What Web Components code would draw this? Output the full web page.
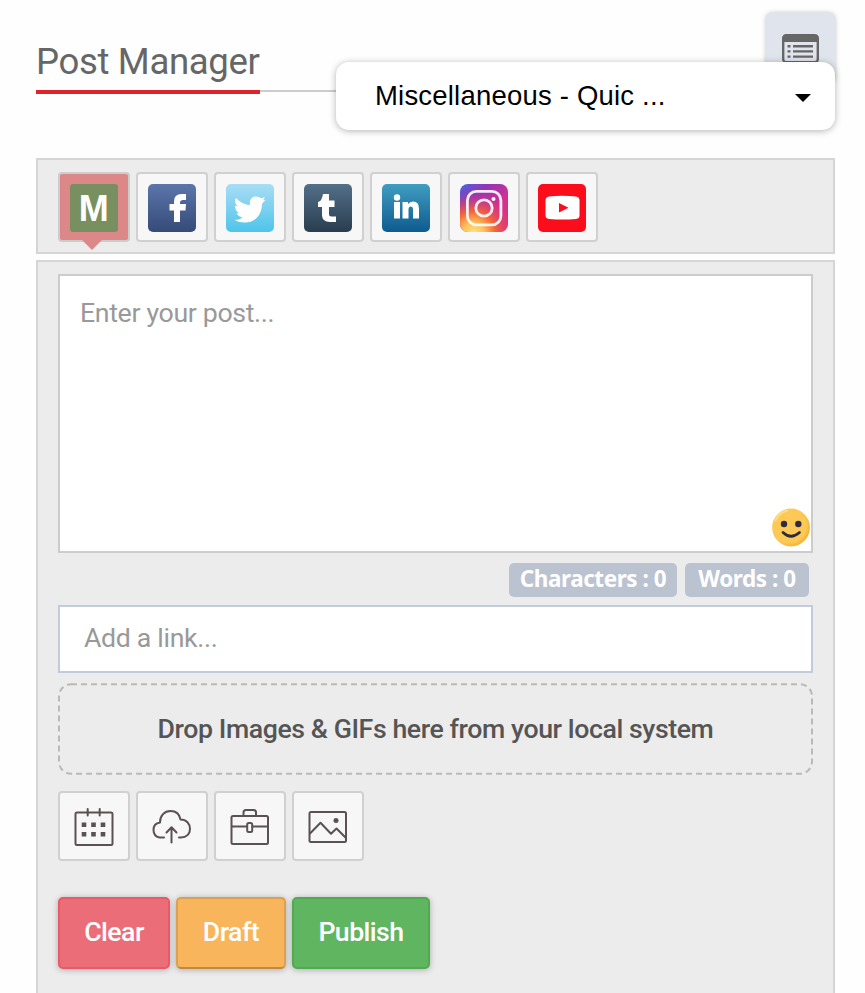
<!DOCTYPE html>
<html lang="en">
<head>
<meta charset="utf-8">
<title>Post Manager</title>
<style>
html,body{margin:0;padding:0;background:#fefefe;overflow:hidden}
body{height:993px;font-family:Roboto,"Liberation Sans",sans-serif}
</style>
</head>
<body>
<post-manager></post-manager>
<script>
const define = (name, html) => {
  const t = document.createElement('template');
  t.innerHTML = html;
  customElements.define(name, class extends HTMLElement {
    constructor() {
      super();
      this.attachShadow({mode: 'open'}).appendChild(t.content.cloneNode(true));
    }
  });
};

define('icon-tile', `
<style>
:host{display:flex;box-sizing:border-box;width:71.500px;height:70px;border:2px solid #d0d0d0;border-radius:4px;background:#f7f7f7;align-items:center;justify-content:center;position:relative}
:host([active]){background:#dd8888;border-color:#ccc}
:host([active])::after{content:"";position:absolute;left:22px;top:65.500px;border:10px solid transparent;border-top-color:#dd8888;border-bottom:0}
</style><slot></slot>`);

define('count-pill', `
<style>
:host{display:flex;box-sizing:border-box;height:34px;border-radius:5px;background:#bbc3d1;color:#fff;font:700 22.500px/34px "Noto Sans",sans-serif;letter-spacing:-.45px;justify-content:center;padding-bottom:3px;align-items:center;white-space:nowrap}
</style><slot></slot>`);

define('action-button', `
<style>
:host{display:flex;box-sizing:border-box;height:72px;border:2px solid var(--edge);border-bottom-color:var(--base,var(--edge));border-radius:5px;background:var(--fill);color:#fff;font-size:26.700px;font-weight:500;letter-spacing:-.55px;align-items:center;justify-content:center;padding-bottom:2px;box-shadow:0 1px 6px rgba(0,0,0,.28);white-space:nowrap}
</style><slot></slot>`);

define('drop-zone', `
<style>
:host{display:block;height:92px;position:relative;color:#555;font-weight:500;font-size:26.700px;letter-spacing:-.42px;line-height:92px;text-align:center;white-space:nowrap}
svg{position:absolute;inset:0}
slot{display:block}
</style>
<svg width="755" height="92" fill="none" stroke="#b9b9b9" stroke-width="2" stroke-dasharray="6 4"><rect x="1" y="1.2" width="753" height="89.6" rx="12"/></svg><slot></slot>`);

define('group-select', `
<style>
:host{display:flex;box-sizing:border-box;width:499.500px;height:68.500px;padding:0 24px 0 39.500px;align-items:center;justify-content:space-between;border-radius:13px;background:#fff;color:#000;font:27.500px/68px "Liberation Sans",Arial,sans-serif;letter-spacing:.2px;box-shadow:0 1px 7px rgba(0,0,0,.3)}
svg{margin-top:4px}
</style><span class="v"><slot></slot></span><svg width="16" height="8"><path d="M0 0h16l-8 8z" fill="#000"/></svg>`);

define('page-head', `
<style>
:host{display:flex;justify-content:space-between;height:158px;position:relative}
h1{margin:0;box-sizing:border-box;width:224px;height:94px;padding-top:41px;border-bottom:4px solid #df232b;font-size:36.600px;letter-spacing:-.36px;line-height:42px;font-weight:400;color:#666;white-space:nowrap}
.rule{flex:1;height:2px;margin-top:90px;background:#ccc}
.list{width:69px;height:70px;margin-top:13px;border-radius:6px;background:#e0e4ec;box-shadow:0 0 5px rgba(0,0,0,.25)}
.list svg{display:block;margin:20.500px 0 0 16px}
group-select{position:absolute;right:0;top:61.500px}
</style>
<h1>Post Manager</h1><div class="rule"></div>
<div class="list"><svg width="37" height="29"><rect x="1.2" y="1.2" width="34.6" height="27" rx="3" fill="none" stroke="#666" stroke-width="2.4"/><path d="M1 8V4q0-3 3-3h29q3 0 3 3v4z" fill="#666"/><path d="M5.5 12.2h3M5.5 17.4h3M5.5 22.6h3M11 12.2h20M11 17.4h20M11 22.6h20" stroke="#666" stroke-width="2.4"/></svg></div>
<group-select>Miscellaneous - Quic ...</group-select>`);

define('network-bar', `
<style>
:host{display:flex;box-sizing:border-box;height:96px;border:2px solid #d5d5d5;background:#ececec;padding:12px 20px;gap:6.500px}
.m{width:48px;height:48px;border-radius:3px;background:#789060;color:#fff;font:700 36px/50px "Liberation Sans",sans-serif;text-align:center}
svg,.m{display:block;margin-top:1px}
</style>
<icon-tile active><div class="m">M</div></icon-tile>
<icon-tile><svg width="48" height="48"><defs><linearGradient id="f" x2="0" y2="1"><stop stop-color="#5b76ab"/><stop offset="1" stop-color="#354b78"/></linearGradient></defs><rect width="48" height="48" rx="5" fill="url(#f)"/><path d="M26 38V26.500h-4.500V20H26v-2.500Q26 10 33.500 10H38v6h-3Q32 16 32 19v1h6l-.5 6.500H32V38z" fill="#fff"/></svg></icon-tile>
<icon-tile><svg width="48" height="48"><defs><linearGradient id="w" x2="0" y2="1"><stop stop-color="#a8ddf5"/><stop offset="1" stop-color="#4fc4ea"/></linearGradient></defs><rect width="48" height="48" rx="5" fill="url(#w)"/><path d="M10 14q6 6.500 14 7c-1-5 2-8.500 6-8.500q3 0 5 1.800l4-1-2 3 2.500-.5-3.500 4C36 30 30 38.500 19 38.500q-6 0-10.500-2.500 5 0 8-2.500-4.500-1-6-4.500h2.500Q9 27 9 21.500l3 1Q7.500 19 10 14z" fill="#fff"/></svg></icon-tile>
<icon-tile><svg width="48" height="48"><defs><linearGradient id="t" x2="0" y2="1"><stop stop-color="#526f89"/><stop offset="1" stop-color="#2a3d4f"/></linearGradient></defs><rect width="48" height="48" rx="5" fill="url(#t)"/><path d="M19 10h6v6.500h5.500V23H25v7q0 2.500 2.500 2.500H32V38h-6q-8 0-8-7v-8h-4v-5q4-1 5-8z" fill="#fff"/></svg></icon-tile>
<icon-tile><svg width="48" height="48"><defs><linearGradient id="l" x2="0" y2="1"><stop stop-color="#409dc0"/><stop offset="1" stop-color="#0e5b90"/></linearGradient></defs><rect width="48" height="48" rx="5" fill="url(#l)"/><g fill="#fff"><circle cx="15" cy="13.500" r="3.200"/><rect x="12" y="18" width="6" height="16.500"/><path d="M20.500 18h5.500v2q2-2.500 5-2.500 6 0 6 7v10h-6V25q0-2.500-2-2.500-2.500 0-2.500 3v9h-6z"/></g></svg></icon-tile>
<icon-tile><svg width="48" height="48"><defs><linearGradient id="i" x2=".85" y2="1"><stop stop-color="#4765df"/><stop offset=".3" stop-color="#9334b5"/><stop offset=".62" stop-color="#cf3091"/><stop offset="1" stop-color="#df347e"/></linearGradient><radialGradient id="j" cx=".28" cy="1.030" r=".88"><stop stop-color="#ffe48a"/><stop offset=".25" stop-color="#ffc25b"/><stop offset=".52" stop-color="#f46638"/><stop offset="1" stop-color="#d13082" stop-opacity="0"/></radialGradient></defs><rect width="48" height="48" rx="8" fill="url(#i)"/><rect width="48" height="48" rx="8" fill="url(#j)"/><g fill="none" stroke="#fff" stroke-opacity=".9" stroke-width="2.800"><rect x="7.400" y="7.400" width="33.500" height="33.500" rx="9"/><circle cx="24" cy="24" r="8.200"/></g><circle cx="33.500" cy="15" r="2" fill="#fff"/></svg></icon-tile>
<icon-tile><svg width="48" height="48"><rect width="48" height="48" rx="5" fill="#fc0d1b"/><path d="M11 12.500q13-1.500 27 0 3.500.5 3.500 4v15q0 3-3.500 3.500-13 1-27 0-3.500-.5-3.500-3.500v-15q0-3.500 3.500-4z" fill="#fff"/><path d="M21 19v9.500l9.500-4.700z" fill="#fc0d1b"/></svg></icon-tile>`);

define('post-form', `
<style>
:host{display:flex;flex-direction:column;box-sizing:border-box;margin-top:6px;height:760px;border:2px solid #d5d5d5;border-bottom:0;background:#ececec;padding:12px 20px}
.post{box-sizing:border-box;height:279px;border:2px solid #ccc;background:#fff;color:#999;font-size:26.700px;letter-spacing:-.34px;line-height:32px;padding:21px 20px;position:relative}
.post svg{position:absolute;right:1px;bottom:4px}
.counts{display:flex;justify-content:flex-end;gap:8px;padding:10px 4px 8px}
.link{box-sizing:border-box;height:68px;border:2px solid #c2cbdc;background:#fff;color:#999;font-size:26.700px;letter-spacing:-.32px;line-height:62px;padding:0 24px}
drop-zone{margin-top:10px}
.tools,.acts{display:flex;gap:6px}
.tools{margin-top:16px;gap:6.500px}.acts{margin-top:36px}
.tools svg{flex:none;margin-top:1px;fill:none;stroke:#5b5152;stroke-width:2;stroke-linecap:round;stroke-linejoin:round}
.tools .s{fill:#5b5152;stroke:none}
</style>
<div class="post"><span>Enter your post...</span><svg width="38" height="39"><defs><radialGradient id="e" cx=".43" cy=".43" r=".6"><stop offset=".78" stop-color="#fcc956"/><stop offset="1" stop-color="#f8ad27"/></radialGradient></defs><circle cx="19" cy="19.500" r="18.900" fill="url(#e)"/><path d="M3 13Q8 3.500 16 2.500" stroke="#fddc8c" stroke-width="2" fill="none"/><circle cx="12" cy="16" r="3.200" fill="#302b3b"/><circle cx="26.300" cy="16" r="3.200" fill="#302b3b"/><path d="M11 24.500q8 7.500 16.500 0" fill="none" stroke="#302b3b" stroke-width="2.700" stroke-linecap="round"/></svg></div>
<div class="counts"><count-pill style="width:168px"><span>Characters : 0</span></count-pill><count-pill style="width:124px"><span>Words : 0</span></count-pill></div>
<div class="link"><span>Add a link...</span></div>
<drop-zone><span>Drop Images &amp; GIFs here from your local system</span></drop-zone>
<div class="tools">
<icon-tile><svg width="68" height="66"><rect x="15.500" y="18.500" width="37" height="32.500" rx="1.500"/><path d="M27.700 15v6.500M39.700 15v6.500"/><path class="s" d="M21.700 28.500h4.600v4.500h-4.600zM31.200 28.500h4.600v4.500h-4.600zM40.700 28.500h4.600v4.500h-4.600zM21.700 38h4.600v4.500h-4.600zM31.200 38h4.600v4.500h-4.600zM40.700 38h4.600v4.500h-4.600z"/></svg></icon-tile>
<icon-tile><svg width="68" height="66"><path d="M26 43.500h-4.500C17 42.500 15.500 39 15.500 36c0-4 2.500-7 6.500-7.500C22 21.500 26.500 17 32.500 17c5 0 9 3 10 8.500 6 0 9.500 4 9.500 9.500 0 5-3.500 8.500-9 8.500h-2M33.500 48.500V33.500M28.500 38.500l5-5.200 5 5.200"/></svg></icon-tile>
<icon-tile><svg width="68" height="66"><rect x="15.500" y="22" width="36.500" height="28" rx="1.500"/><path d="M27.500 21.500v-3q0-2.500 2.500-2.500h7.500q2.500 0 2.500 2.500v3M16 32.500h15M36.500 32.500H52"/><rect x="31.200" y="29" width="5" height="9" rx="1.500"/></svg></icon-tile>
<icon-tile><svg width="68" height="66"><rect x="15.500" y="18" width="36.500" height="30" rx="1.500"/><path d="M16 39.500l10.500-10.700 10.500 11 5.500-5.300L52 44"/><circle class="s" cx="42" cy="26.500" r="2.500"/></svg></icon-tile>
</div>
<div class="acts"><action-button style="width:112px;--fill:#eb6d78;--edge:#e95966"><span>Clear</span></action-button><action-button style="width:110px;--fill:#f8b55c;--edge:#dca14f;--base:#c08a42"><span>Draft</span></action-button><action-button style="width:138px;--fill:#60b561;--edge:#50ab50"><span>Publish</span></action-button></div>`);

define('post-manager', `
<style>
:host{display:block;box-sizing:border-box;width:865px;height:993px;padding:0 30px 0 36px;overflow:hidden}
</style><page-head></page-head><network-bar></network-bar><post-form></post-form>`);
</script>
</body>
</html>
